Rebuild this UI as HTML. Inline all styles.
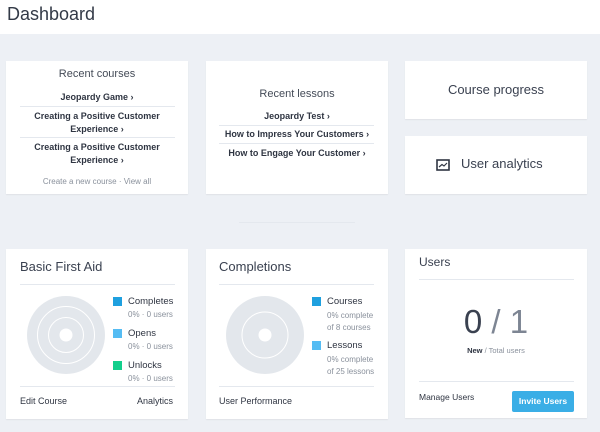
<!DOCTYPE html>
<html><head><meta charset="utf-8"><style>
*{margin:0;padding:0;box-sizing:border-box}
body{width:600px;height:432px;background:#edf0f5;font-family:"Liberation Sans",sans-serif;color:#2f3542;position:relative;overflow:hidden}
.a{position:absolute;white-space:nowrap}
.card{position:absolute;background:#fff;box-shadow:0 1px 1px rgba(0,0,0,.06)}
.c{text-align:center}
.b{font-weight:bold;font-size:9px;color:#2f3542}
.hl{position:absolute;height:1px;background:#e4e8ee}
.g{color:#8a919c;font-size:8px}
.sq{position:absolute;width:9px;height:9px}
</style></head><body>
<div class="a" style="left:0;top:0;width:600px;height:34px;background:#fff"></div>
<div class="a" style="left:7px;top:4px;font-size:18px;color:#333a47">Dashboard</div>

<div class="card" style="left:6px;top:61px;width:182px;height:133px"></div>
<div class="a c" style="left:6px;width:182px;top:68px;font-size:11px;color:#444b57">Recent courses</div>
<div class="a c b" style="left:6px;width:182px;top:92px">Jeopardy Game ›</div>
<div class="hl" style="left:20px;width:155px;top:106px"></div>
<div class="a c b" style="left:6px;width:182px;top:110px;line-height:13px">Creating a Positive Customer<br>Experience ›</div>
<div class="hl" style="left:20px;width:155px;top:137px"></div>
<div class="a c b" style="left:6px;width:182px;top:141px;line-height:13px">Creating a Positive Customer<br>Experience ›</div>
<div class="a c g" style="left:6px;width:182px;top:177px">Create a new course · View all</div>

<div class="card" style="left:206px;top:61px;width:182px;height:133px"></div>
<div class="a c" style="left:206px;width:182px;top:88px;font-size:11px;color:#444b57">Recent lessons</div>
<div class="a c b" style="left:206px;width:182px;top:111px">Jeopardy Test ›</div>
<div class="hl" style="left:219px;width:155px;top:125px"></div>
<div class="a c b" style="left:206px;width:182px;top:129px">How to Impress Your Customers ›</div>
<div class="hl" style="left:219px;width:155px;top:143px"></div>
<div class="a c b" style="left:206px;width:182px;top:148px">How to Engage Your Customer ›</div>

<div class="card" style="left:405px;top:61px;width:182px;height:58px"></div>
<div class="a c" style="left:405px;width:182px;top:82px;font-size:13px;color:#3a4150">Course progress</div>
<div class="card" style="left:405px;top:136px;width:182px;height:58px"></div>
<svg class="a" style="left:436px;top:159px" width="14" height="12" viewBox="0 0 14 12"><rect x="1" y="1" width="12" height="10" fill="none" stroke="#2f3542" stroke-width="1.6"/><path d="M3 8 L6 5.5 L8 7 L11 4" fill="none" stroke="#2f3542" stroke-width="1.2"/></svg>
<div class="a" style="left:461px;top:156px;font-size:13px;color:#3a4150">User analytics</div>

<div class="hl" style="left:239px;width:116px;top:222px"></div>

<div class="card" style="left:6px;top:249px;width:182px;height:170px"></div>
<div class="a" style="left:20px;top:259px;font-size:13px;color:#3a4150">Basic First Aid</div>
<div class="hl" style="left:20px;width:155px;top:284px"></div>
<svg class="a" style="left:27px;top:296px" width="78" height="78"><circle cx="39" cy="39" r="39" fill="#e3e7ec"/><circle cx="39" cy="39" r="28.5" fill="none" stroke="#fff" stroke-width="1"/><circle cx="39" cy="39" r="17.5" fill="none" stroke="#fff" stroke-width="1"/><circle cx="39" cy="39" r="6.5" fill="#fff"/></svg>
<div class="sq" style="left:113px;top:297px;background:#1fa0df"></div>
<div class="a" style="left:128px;top:296px;font-size:9.5px">Completes</div>
<div class="a g" style="left:128px;top:310px">0% · 0 users</div>
<div class="sq" style="left:113px;top:329px;background:#55bcf3"></div>
<div class="a" style="left:128px;top:328px;font-size:9.5px">Opens</div>
<div class="a g" style="left:128px;top:342px">0% · 0 users</div>
<div class="sq" style="left:113px;top:361px;background:#13cf8c"></div>
<div class="a" style="left:128px;top:360px;font-size:9.5px">Unlocks</div>
<div class="a g" style="left:128px;top:374px">0% · 0 users</div>
<div class="hl" style="left:20px;width:155px;top:386px"></div>
<div class="a" style="left:20px;top:396px;font-size:9px">Edit Course</div>
<div class="a" style="left:137px;top:396px;font-size:9px">Analytics</div>

<div class="card" style="left:206px;top:249px;width:182px;height:170px"></div>
<div class="a" style="left:219px;top:259px;font-size:13px;color:#3a4150">Completions</div>
<div class="hl" style="left:219px;width:155px;top:284px"></div>
<svg class="a" style="left:226px;top:296px" width="78" height="78"><circle cx="39" cy="39" r="39" fill="#e3e7ec"/><circle cx="39" cy="39" r="23" fill="none" stroke="#fff" stroke-width="1"/><circle cx="39" cy="39" r="6.5" fill="#fff"/></svg>
<div class="sq" style="left:312px;top:297px;background:#1fa0df"></div>
<div class="a" style="left:327px;top:296px;font-size:9.5px">Courses</div>
<div class="a g" style="left:327px;top:310px;line-height:12px">0% complete<br>of 8 courses</div>
<div class="sq" style="left:312px;top:341px;background:#55bcf3"></div>
<div class="a" style="left:327px;top:340px;font-size:9.5px">Lessons</div>
<div class="a g" style="left:327px;top:354px;line-height:12px">0% complete<br>of 25 lessons</div>
<div class="hl" style="left:219px;width:155px;top:386px"></div>
<div class="a" style="left:219px;top:396px;font-size:9px">User Performance</div>

<div class="card" style="left:405px;top:249px;width:182px;height:169px"></div>
<div class="a" style="left:419px;top:255px;font-size:12px;color:#3a4150">Users</div>
<div class="hl" style="left:419px;width:155px;top:279px"></div>
<div class="a c" style="left:405px;width:182px;top:303px;font-size:33px;color:#3a4150">0 <span style="color:#7d8593">/ 1</span></div>
<div class="a c" style="left:405px;width:182px;top:346px;font-size:7.5px"><b>New</b> <span style="color:#8a919c">/ Total users</span></div>
<div class="hl" style="left:419px;width:155px;top:381px"></div>
<div class="a" style="left:419px;top:392px;font-size:8.5px">Manage Users</div>
<div class="a c" style="left:512px;top:391px;width:62px;height:21px;background:#3aaee6;border-radius:2px;color:#fff;font-size:8.5px;font-weight:bold;line-height:21px">Invite Users</div>
</body></html>
